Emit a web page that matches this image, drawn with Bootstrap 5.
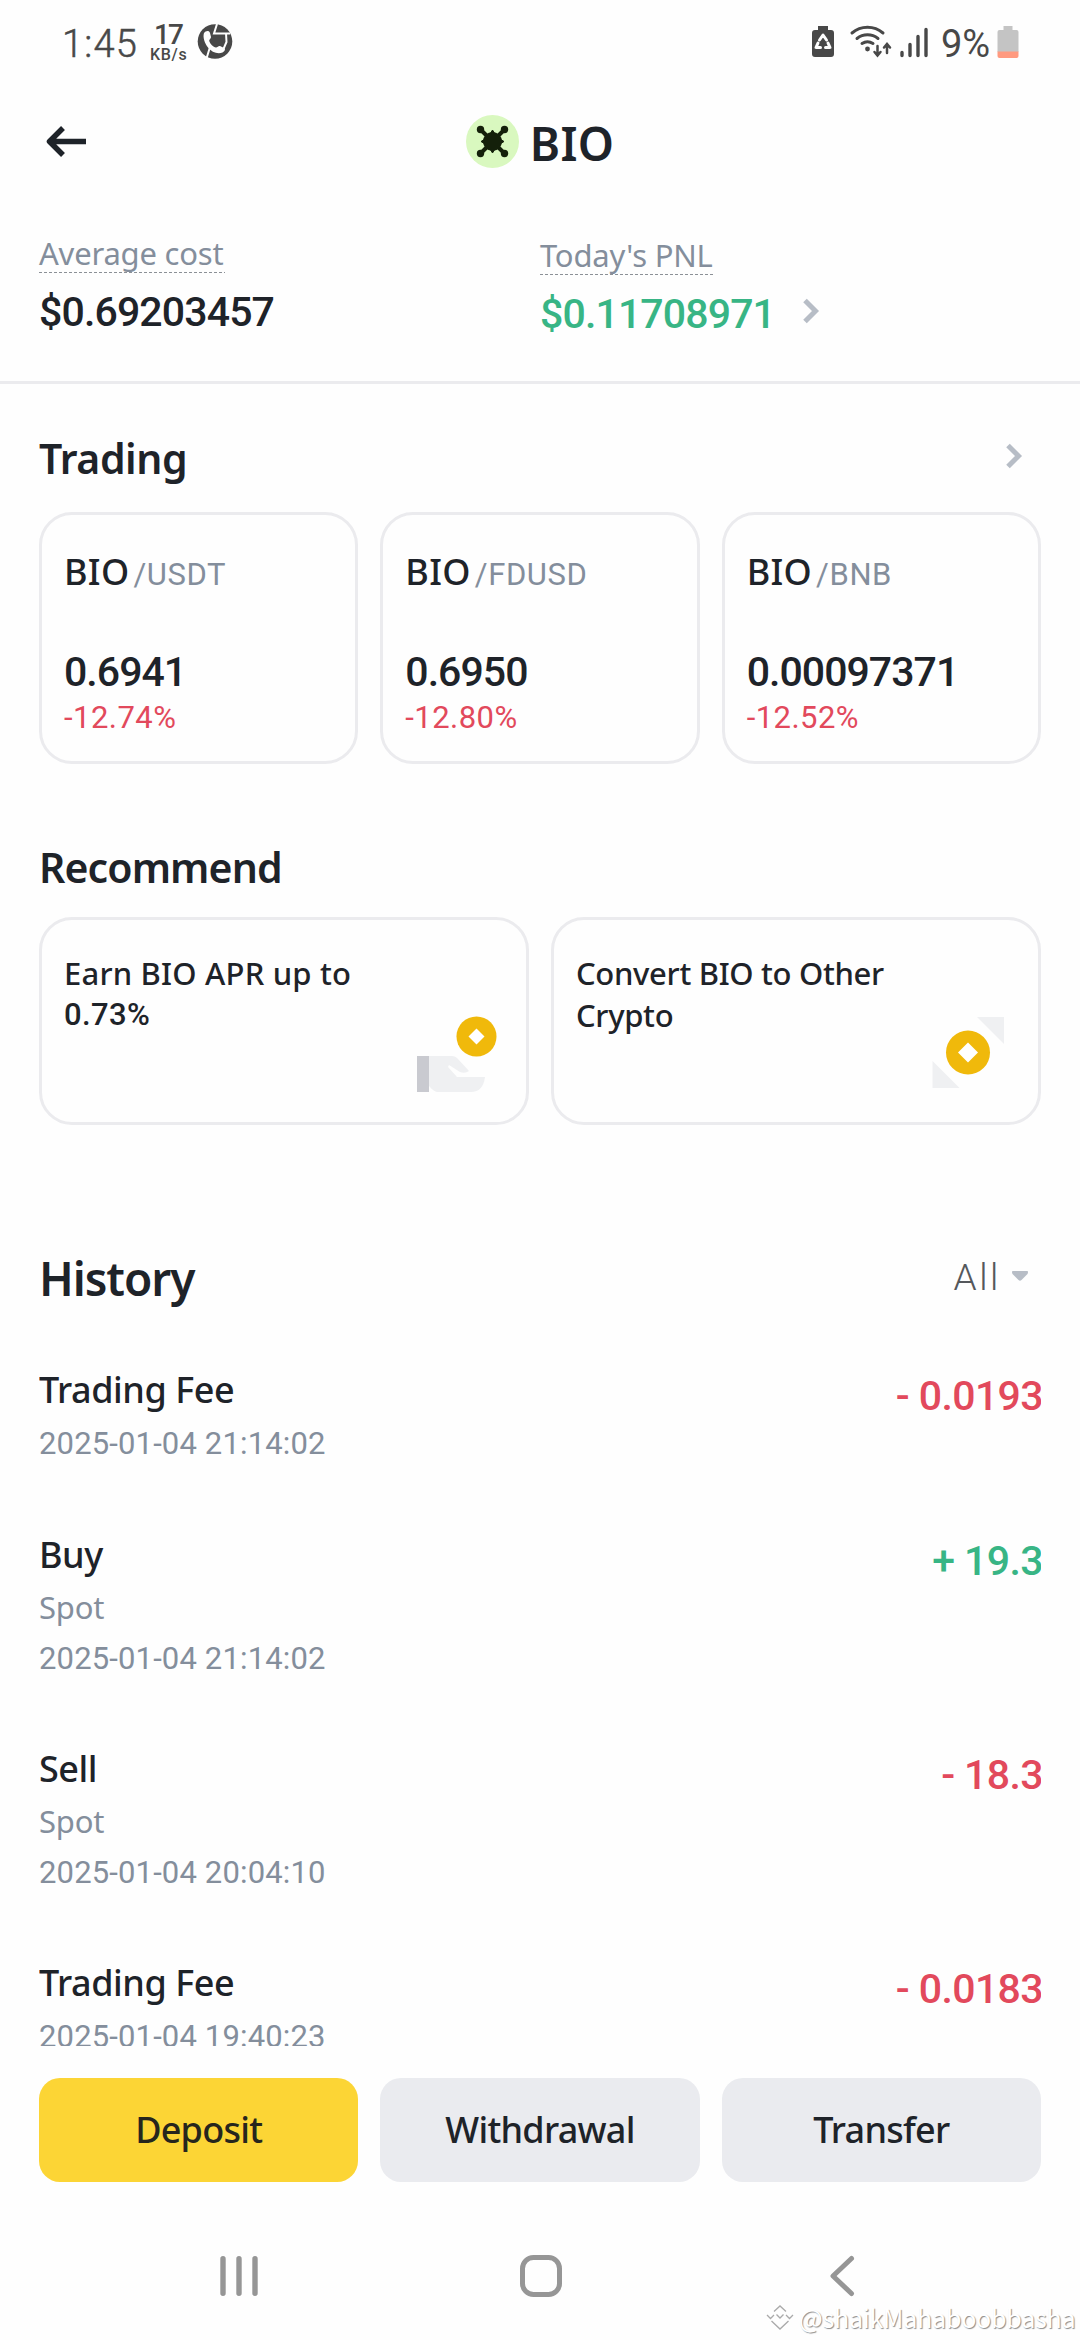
<!DOCTYPE html>
<html lang="en">
<head>
<meta charset="utf-8">
<meta name="viewport" content="width=device-width, initial-scale=1">
<title>BIO</title>
<link rel="stylesheet" href="https://cdn.jsdelivr.net/npm/bootstrap@5.3.0/dist/css/bootstrap.min.css">
<style>
  :root { --ink:#1e2329; --muted:#848e9c; --line:#ebebee; --up:#38b585; --down:#e2495c; --soft:#eaebef; }
  body { width:1080px; height:2340px; overflow:hidden; background:#fefefe; color:var(--ink); font-family:"Noto Sans","Open Sans",sans-serif; font-size:31px; line-height:42px; }
  svg { display:block; flex:none; }
  .din { font-family:Roboto,"Noto Sans",sans-serif; }
  .muted { color:var(--muted); }
  .up { color:var(--up); } .down { color:var(--down); }

  .status { height:88px; padding:0 61px 0 62px; color:#484848; font-size:38px; line-height:44px; }
  .clock { width:88px; letter-spacing:1.2px; font-weight:300; -webkit-text-stroke:.5px #484848; }
  .speed { width:36px; font-weight:500; text-align:center; }
  .speed-n { font-size:28px; line-height:20px; letter-spacing:-2px; }
  .speed-u { font-size:16px; line-height:19px; letter-spacing:.7px; white-space:nowrap; }

  .topbar { height:107px; padding:0 39px; }
  .coin-name { font-size:46px; line-height:56px; font-weight:600; padding-top:3px; letter-spacing:.3px; }

  .stats { height:189px; padding:40px 39px 0; border-bottom:3px solid var(--line); }
  .stat { width:501px; }
  .stat-r { padding-top:2px; }
  .hint { line-height:36px; height:38px; margin-bottom:15px; letter-spacing:-.2px; padding-right:1px; white-space:nowrap;
    background:repeating-linear-gradient(90deg,#8b9096 0 3px,transparent 3px 5px) left bottom/100% 1px no-repeat; }
  .stat-v { font-size:41px; line-height:48px; font-weight:500; letter-spacing:-.85px; }

  .page-x { padding-left:39px; padding-right:39px; }
  .sec { font-size:41px; line-height:56px; font-weight:600; letter-spacing:-.45px; margin:0; }
  .tile { flex:1 1 0; border:3px solid var(--line); border-radius:33px; background:transparent; }
  .pair { height:252px; padding:33px 22px 0; }
  .pair-b { font-size:36px; line-height:48px; font-weight:500; letter-spacing:.3px; }
  .pair-q { letter-spacing:.6px; margin-left:4px; }
  .price { font-size:41px; line-height:48px; font-weight:500; letter-spacing:-.95px; margin-top:52px; }
  .pct { line-height:36px; letter-spacing:.45px; margin-top:4px; }
  .offer { height:208px; padding:32px 20px 18px 22px; font-weight:500; }
  .offer-t { width:330px; white-space:nowrap; }

  .hist-h { font-size:46px; line-height:64px; font-weight:600; letter-spacing:-1.05px; margin:0; padding-left:0; }
  .filter { font-size:37px; line-height:44px; font-weight:300; letter-spacing:2.6px; color:#55585c; }
  .feed { height:680px; overflow:hidden; gap:61px; }
  .entry-n { font-size:36px; line-height:48px; font-weight:500; letter-spacing:-.45px; margin-bottom:5px; }
  .entry-w { line-height:46px; margin-bottom:4px; letter-spacing:-.2px; }
  .entry-t { line-height:50px; letter-spacing:.15px; }
  .first-entry { margin-bottom:1px; }
  .amount { font-size:41px; line-height:60px; font-weight:500; letter-spacing:-.6px; margin-right:-2px; }

  .act { flex:1 1 0; height:104px; border:0; border-radius:21px; font-size:36px; font-weight:500; letter-spacing:-.75px; background:var(--soft); color:var(--ink); }
  .act-main { background:#fcd535; color:#26261d; }
  .sysnav { height:158px; padding:0 87px 0 88px; }
  .sysnav > div { width:302px; padding-top:30px; }

  .sig { position:absolute; left:766px; top:2299px; color:#fff; font-family:"Noto Sans CJK SC","Noto Sans",sans-serif; font-size:25px; line-height:36px; letter-spacing:-.2px; text-shadow:1px 1px 1px rgba(0,0,0,.45); white-space:nowrap; gap:5px; }
</style>
<script src="https://cdn.jsdelivr.net/npm/bootstrap@5.3.0/dist/js/bootstrap.bundle.min.js"></script>
</head>
<body class="d-flex flex-column position-relative m-0">

<div class="status din d-flex align-items-center justify-content-between">
  <div class="d-flex align-items-center">
    <span class="clock">1:45</span>
    <div class="speed"><div class="speed-n">17</div><div class="speed-u">KB/s</div></div>
    <svg width="36" height="88" viewBox="0 0 36 88" style="margin-left:11px">
      <circle cx="18" cy="41.5" r="17.3" fill="#484848"/>
      <path d="M20 24 L17 33.5 H33 M29 33 L29.5 42 L26 50 M13 47 L9.500 58.500" fill="none" stroke="#fefefe" stroke-width="2"/>
      <path d="M7 33c1.500-2 5-3 6 0l1 4c.3 1.500-2.200 2.500-1.800 4 1 3 4 6 6.800 6.500 1.500 0 2.500-2 4-1.500l4 2c2 1 .5 3.500-1.500 4.500-5 2-11-.5-14.500-5C8 44 5.500 37 7 33z" fill="#fefefe"/>
    </svg>
  </div>
  <div class="d-flex align-items-center">
    <svg width="118" height="88" viewBox="810 0 118 88" fill="none" stroke="#484848" stroke-linecap="round" style="margin-right:13px">
      <path d="M818 26h10v4h3q3 0 3 3v21q0 3-3 3h-16q-3 0-3-3V33q0-3 3-3h3z" fill="#484848" stroke="none"/>
      <path d="M819.500 40l3.500-5 3.500 5M828 43l2 4.500h-4.500M818 43l-2 4.500h4.500" stroke="#fefefe" stroke-width="3" stroke-linejoin="round"/>
      <path d="M852 33a24 24 0 0 1 31 0M857 38.500a17 17 0 0 1 21 0M862 43.500a10 10 0 0 1 11 0" stroke-width="3"/>
      <circle cx="867.500" cy="49" r="2.400" fill="#484848" stroke="none"/>
      <path d="M877.500 46v9m-3-3l3 3.500 3-3.500M887 53v-8m-3 2.500l3-3.500 3 3.500" stroke-width="2.500"/>
      <path d="M902 52.500v3M910 44.500v11M918 36.500v19M926 29.500v26" stroke-width="3.400"/>
    </svg>
    <span style="width:56px">9%</span>
    <svg width="22" height="88" viewBox="0 0 22 88">
      <path d="M6.500 26h9v4h4q2 0 2 2v20h-21V32q0-2 2-2h4z" fill="#c4c4c4"/>
      <path d="M.5 51.500h21V56q0 2-2 2h-17q-2 0-2-2z" fill="#ff9a80"/>
    </svg>
  </div>
</div>

<header class="topbar d-flex align-items-center">
  <div class="flex-fill" style="width:0">
    <svg width="50" height="36" viewBox="0 0 50 36" fill="none" stroke="#1e2329" stroke-width="5.500" stroke-linejoin="round"><path d="M47 17.500H11M24 4L10.500 17.500 24 31"/></svg>
  </div>
  <div class="d-flex align-items-center" style="gap:11px">
    <svg width="53" height="53" viewBox="0 0 53 53">
      <circle cx="26.500" cy="26.500" r="26.500" fill="#d9f8bf"/>
      <g fill="#14200a" stroke="#14200a">
        <path d="M14 14L39 39M39 14L14 39" stroke-width="4"/>
        <circle cx="14.500" cy="14.500" r="3.700" stroke="none"/><circle cx="38.500" cy="14.500" r="3.700" stroke="none"/>
        <circle cx="14.500" cy="38.500" r="3.700" stroke="none"/><circle cx="38.500" cy="38.500" r="3.700" stroke="none"/>
        <circle cx="26.500" cy="26.500" r="9.500" stroke="none"/>
        <path d="M26.500 15l2.500 4h-5zM26.500 38l2.500-4h-5zM15 26.500l4-2.500v5zM38 26.500l-4-2.500v5z" stroke-width="1"/>
      </g>
    </svg>
    <span class="coin-name">BIO</span>
  </div>
  <div class="flex-fill" style="width:0"></div>
</header>

<section class="stats d-flex">
  <div class="stat d-flex flex-column align-items-start">
    <span class="hint muted">Average cost</span>
    <span class="stat-v din">$0.69203457</span>
  </div>
  <div class="stat stat-r d-flex flex-column align-items-start">
    <span class="hint muted">Today's PNL</span>
    <div class="d-flex align-items-center">
      <span class="stat-v din up">$0.11708971</span>
      <svg width="20" height="28" viewBox="0 0 20 28" fill="none" stroke="#b7bdc6" stroke-width="5" style="margin:-6px 0 0 27px"><path d="M3 3.500L13.500 14 3 24.500"/></svg>
    </div>
  </div>
</section>

<section class="page-x" style="padding-top:46px">
  <div class="d-flex align-items-center justify-content-between">
    <h2 class="sec">Trading</h2>
    <svg width="37" height="28" viewBox="0 0 37 28" fill="none" stroke="#b7bdc6" stroke-width="5" style="margin-top:-4px"><path d="M4 3.500L14.500 14 4 24.500"/></svg>
  </div>
  <div class="d-flex" style="gap:22px;margin-top:26px">
    <div class="tile pair">
      <div class="d-flex align-items-baseline"><span class="pair-b">BIO</span><span class="pair-q din muted">/USDT</span></div>
      <div class="price din">0.6941</div>
      <div class="pct din down">-12.74%</div>
    </div>
    <div class="tile pair">
      <div class="d-flex align-items-baseline"><span class="pair-b">BIO</span><span class="pair-q din muted">/FDUSD</span></div>
      <div class="price din">0.6950</div>
      <div class="pct din down">-12.80%</div>
    </div>
    <div class="tile pair">
      <div class="d-flex align-items-baseline"><span class="pair-b">BIO</span><span class="pair-q din muted">/BNB</span></div>
      <div class="price din">0.00097371</div>
      <div class="pct din down">-12.52%</div>
    </div>
  </div>
</section>

<section class="page-x" style="padding-top:75px">
  <h2 class="sec" style="letter-spacing:-.9px">Recommend</h2>
  <div class="d-flex" style="gap:22px;margin-top:22px">
    <div class="tile offer d-flex justify-content-between">
      <div class="offer-t"><div style="letter-spacing:.2px">Earn BIO APR up to</div><div class="din" style="letter-spacing:.4px">0.73%</div></div>
      <svg class="align-self-end" width="96" height="96" viewBox="0 0 96 96">
        <path d="M19 48H42q3 0 5 2l12 13q-4 3-9 1l-11-7-1 2 9 10H75q-2 15-14 15H28q-4 0-9-6z" fill="#eff0f2"/>
        <path d="M7 48h12v36H7z" fill="#c9cad0"/>
        <circle cx="66.500" cy="28.500" r="20" fill="#f0b90b"/>
        <path d="M66.500 20.500l8 8-8 8-8-8z" fill="#fff"/>
      </svg>
    </div>
    <div class="tile offer d-flex justify-content-between">
      <div class="offer-t" style="letter-spacing:-.32px">Convert BIO to Other<br>Crypto</div>
      <svg class="align-self-end" width="96" height="96" viewBox="0 0 96 96">
        <path d="M55 9h27v27zM10.500 53v27h27z" fill="#eff0f2"/>
        <circle cx="46" cy="44.500" r="22" fill="#f0b90b"/>
        <path d="M46 34.500l10 10-10 10-10-10z" fill="#fff"/>
      </svg>
    </div>
  </div>
</section>

<section class="page-x" style="padding-top:121px">
  <div class="d-flex align-items-center justify-content-between" style="margin-bottom:56px">
    <h2 class="hist-h">History</h2>
    <div class="filter din d-flex align-items-center">
      <span>All</span>
      <svg width="18" height="12" viewBox="0 0 18 12" style="margin:-4px 12px 0 10px"><path d="M1.500 1h15q1 1 0 3l-6 6q-1.500 1.300-3 0l-6-6q-1-2 0-3z" fill="#b7bdc6"/></svg>
    </div>
  </div>
  <div class="feed d-flex flex-column">
    <div class="first-entry d-flex justify-content-between align-items-start">
      <div><div class="entry-n">Trading Fee</div><div class="entry-t din muted">2025-01-04 21:14:02</div></div>
      <div class="amount din down">- 0.0193</div>
    </div>
    <div class="d-flex justify-content-between align-items-start">
      <div><div class="entry-n">Buy</div><div class="entry-w muted">Spot</div><div class="entry-t din muted">2025-01-04 21:14:02</div></div>
      <div class="amount din up">+ 19.3</div>
    </div>
    <div class="d-flex justify-content-between align-items-start">
      <div><div class="entry-n">Sell</div><div class="entry-w muted">Spot</div><div class="entry-t din muted">2025-01-04 20:04:10</div></div>
      <div class="amount din down">- 18.3</div>
    </div>
    <div class="d-flex justify-content-between align-items-start">
      <div><div class="entry-n">Trading Fee</div><div class="entry-t din muted">2025-01-04 19:40:23</div></div>
      <div class="amount din down">- 0.0183</div>
    </div>
  </div>
</section>

<footer>
  <div class="page-x d-flex" style="gap:22px;padding-top:32px">
    <button class="btn act act-main" type="button">Deposit</button>
    <button class="btn act" type="button">Withdrawal</button>
    <button class="btn act" type="button">Transfer</button>
  </div>
  <div class="sysnav d-flex align-items-center">
    <div class="d-flex justify-content-center"><svg width="42" height="44" viewBox="0 0 42 44" stroke="#969696" stroke-width="5.400" stroke-linecap="round"><path d="M5 4.700v34.600M21 4.700v34.600M37 4.700v34.600"/></svg></div>
    <div class="d-flex justify-content-center"><svg width="44" height="44" viewBox="0 0 44 44" fill="none" stroke="#969696" stroke-width="5"><rect x="3.500" y="3.500" width="37" height="37" rx="11"/></svg></div>
    <div class="d-flex justify-content-center"><svg width="28" height="44" viewBox="0 0 28 44" fill="none" stroke="#969696" stroke-width="5" stroke-linecap="round" stroke-linejoin="round"><path d="M23.500 4.500L5 22l18.500 17.500"/></svg></div>
  </div>
</footer>

<div class="sig d-flex align-items-center">
  <svg width="28" height="25" viewBox="0 0 28 25" fill="none" stroke="#aaa" stroke-width="1.300">
    <path d="M8 6.500L14 1l6 5.500M1 10l3.500 3.500L8 10M20 10l3.500 3.500L27 10M5.500 16L14 24l8.500-8M10.500 9.500L14 13l3.500-3.500"/>
  </svg>
  <span>@shaikMahaboobbasha</span>
</div>

</body>
</html>
